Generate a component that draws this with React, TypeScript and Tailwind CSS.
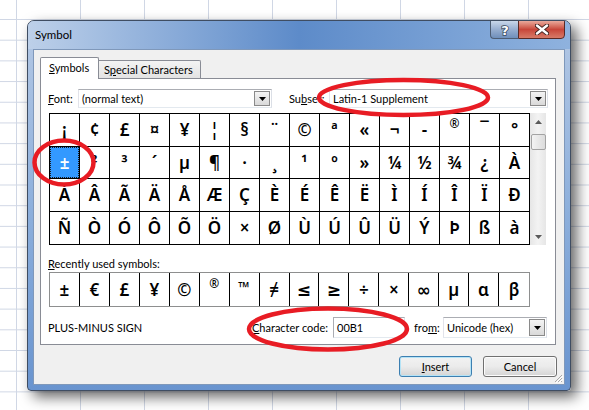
import React from "react";

const UI = "font-['Lato','Noto_Sans',sans-serif]";
const GLYPH = "font-['Noto_Sans','DejaVu_Sans',sans-serif]";

const rows: string[][] = [
  ["¡", "¢", "£", "¤", "¥", "¦", "§", "¨", "©", "ª", "«", "¬", "-", "®", "¯", "°"],
  ["±", "²", "³", "´", "µ", "¶", "·", "¸", "¹", "º", "»", "¼", "½", "¾", "¿", "À"],
  ["Á", "Â", "Ã", "Ä", "Å", "Æ", "Ç", "È", "É", "Ê", "Ë", "Ì", "Í", "Î", "Ï", "Ð"],
  ["Ñ", "Ò", "Ó", "Ô", "Õ", "Ö", "×", "Ø", "Ù", "Ú", "Û", "Ü", "Ý", "Þ", "ß", "à"],
];

const recent = ["±", "€", "£", "¥", "©", "®", "™", "≠", "≤", "≥", "÷", "×", "∞", "µ", "α", "β"];

function Glyph({ c }: { c: string }) {
  if (c === "®") {
    return <span className="relative -top-[6px] text-[12px]">{c}</span>;
  }
  if (c === "™") {
    return <span className="relative -top-[2px] text-[15px] font-bold">{c}</span>;
  }
  return <>{c}</>;
}

function DropBtn() {
  return (
    <div className="w-[16px] self-stretch my-[1px] mr-[1px] border border-[#8a8a8a] bg-gradient-to-b from-[#f4f4f4] to-[#d9d9d9] flex items-center justify-center">
      <svg width="7" height="4" viewBox="0 0 7 4">
        <path d="M0 0 H7 L3.5 4 Z" fill="#000" />
      </svg>
    </div>
  );
}

function Combo({ w, text }: { w: string; text: string }) {
  return (
    <div className={`${w} h-full flex border border-[#abadb3] border-r-[#dbdfe6] border-b-[#e3e9ef] border-l-[#e2e3ea] bg-white`}>
      <div className="flex-1 pl-[3px] flex items-center text-[11px] text-black leading-none whitespace-nowrap">{text}</div>
      <DropBtn />
    </div>
  );
}

export default function App() {
  return (
    <div
      className={`relative w-[589px] h-[410px] overflow-hidden bg-white ${UI} [background-image:linear-gradient(to_right,#d0d7e5_1px,transparent_1px),linear-gradient(to_bottom,#d0d7e5_1px,transparent_1px)] [background-size:64px_20.7px] [background-position:16px_19px]`}
    >
      <div className="pl-[27px] pt-[20px]">
        {/* dialog window */}
        <div className="w-[544px] h-[371px] rounded-t-[7px] rounded-b-[4px] border border-[#3f4d62] shadow-[6px_6px_14px_rgba(0,0,0,0.6)] bg-gradient-to-b from-[#b4c8e4] via-[#8eb0dc] to-[#6994cf] flex flex-col overflow-hidden">
          {/* title bar */}
          <div className="h-[28px] flex items-start bg-gradient-to-r from-[#bdd0e9] via-[#5d8bc9] to-[#8fb2de]">
            <div className="pl-[7px] pt-[7px] text-[11.5px] leading-[14px] text-black whitespace-nowrap">Symbol</div>
            <div className="ml-auto mr-[5px] flex h-[19px] -mt-px">
              <div className="w-[28px] h-full rounded-bl-[4px] border border-[#4d5d74] border-r-0 bg-gradient-to-b from-[#c9d7ea] via-[#97aed0] to-[#6f8fbb] flex items-center justify-center">
                <svg width="14" height="14" viewBox="0 0 14 14">
                  <text x="7" y="12" textAnchor="middle" fontFamily="DejaVu Sans, sans-serif" fontWeight="bold" fontSize="13" fill="#fff" stroke="#3a4a62" strokeWidth="1.6" paintOrder="stroke">?</text>
                </svg>
              </div>
              <div className="w-[47px] h-full rounded-br-[4px] border border-[#5a2a26] bg-gradient-to-b from-[#e9a99c] via-[#c8463a] to-[#d77a68] flex items-center justify-center">
                <svg width="14" height="11" viewBox="0 0 14 11">
                  <path d="M2 1.5 L12 9.5 M12 1.5 L2 9.5" stroke="#40221f" strokeWidth="4.2" strokeLinecap="round" />
                  <path d="M2 1.5 L12 9.5 M12 1.5 L2 9.5" stroke="#fff" strokeWidth="2.4" strokeLinecap="round" />
                </svg>
              </div>
            </div>
          </div>

          {/* client area */}
          <div className="relative mx-[5px] mb-[5px] flex-1 bg-[#f0f0f0] border border-[#7f98ba] flex flex-col">
            {/* tabs */}
            <div className="ml-[6px] mt-[7px] h-[21px] flex items-end text-[11px] leading-none text-black whitespace-nowrap">
              <div className="relative z-10 w-[59px] h-[22px] -mb-px bg-white border border-[#898c95] border-b-0 rounded-t-[2px] flex items-center pl-[8px] pb-[2px]">
                <span>
                  <span className="underline">S</span>ymbols
                </span>
              </div>
              <div className="w-[102px] h-[18px] border border-[#898c95] border-l-0 border-b-0 rounded-tr-[2px] bg-gradient-to-b from-[#f3f3f3] to-[#e3e3e3] flex items-center pl-[5px]">
                <span>
                  S<span className="underline">p</span>ecial Characters
                </span>
              </div>
            </div>

            {/* panel */}
            <div className="ml-[6px] w-[516px] h-[267px] bg-white border border-[#898c95] flex flex-col text-[11px] text-black whitespace-nowrap">
              {/* font / subset row */}
              <div className="mt-[10px] h-[19px] flex items-center">
                <div className="ml-[7px] w-[30px] leading-none">
                  <span className="underline">F</span>ont:
                </div>
                <Combo w="w-[194px]" text="(normal text)" />
                <div className="ml-[17px] w-[40px] leading-none">
                  Su<span className="underline">b</span>set:
                </div>
                <Combo w="w-[219px]" text="Latin-1 Supplement" />
              </div>

              {/* character grid */}
              <div className="ml-[8px] mt-[5px] flex">
                <div className={`w-[481px] border-l border-t border-[#000] ${GLYPH}`}>
                  {rows.map((r, ri) => (
                    <div key={ri} className="flex">
                      {r.map((c, ci) => (
                        <div
                          key={ci}
                          className={`w-[30px] ${ri === 1 ? "h-[32px]" : "h-[33px]"} border-r border-b border-[#000] flex items-center justify-center text-[17px] font-semibold text-black`}
                        >
                          {ri === 1 && ci === 0 ? (
                            <div className="w-full h-full bg-[#3399ff] border border-dotted border-[#1a1a1a] flex items-center justify-center text-white">
                              {c}
                            </div>
                          ) : (
                            <Glyph c={c} />
                          )}
                        </div>
                      ))}
                    </div>
                  ))}
                </div>
                {/* scrollbar */}
                <div className="w-[16px] h-[132px] bg-gradient-to-r from-[#e6e6e6] via-[#f3f3f3] to-[#e6e6e6] flex flex-col items-center">
                  <div className="h-[17px] flex items-center justify-center">
                    <svg width="7" height="4" viewBox="0 0 7 4">
                      <path d="M0 4 H7 L3.5 0 Z" fill="#5a5a5a" />
                    </svg>
                  </div>
                  <div className="mt-[4px] w-[15px] h-[16px] rounded-[2px] border border-[#a3a3a3] bg-gradient-to-r from-[#f3f3f3] to-[#dcdcdc]" />
                  <div className="mt-auto h-[17px] flex items-center justify-center">
                    <svg width="7" height="4" viewBox="0 0 7 4">
                      <path d="M0 0 H7 L3.5 4 Z" fill="#5a5a5a" />
                    </svg>
                  </div>
                </div>
              </div>

              {/* recent label */}
              <div className="ml-[7px] mt-[11px] h-[16px] leading-[16px]">
                <span className="underline">R</span>ecently used symbols:
              </div>

              {/* recent row */}
              <div className={`ml-[8px] w-[481px] h-[35px] flex border border-[#8e8f8f] ${GLYPH}`}>
                {recent.map((c, i) => (
                  <div
                    key={i}
                    className={`w-[30px] h-full ${i < 15 ? "border-r border-[#000]" : ""} flex items-center justify-center text-[17px] font-semibold text-black`}
                  >
                    <Glyph c={c} />
                  </div>
                ))}
              </div>

              {/* bottom row */}
              <div className="mt-[10px] h-[21px] flex items-center">
                <div className="ml-[7px] w-[204px] leading-none">PLUS-MINUS SIGN</div>
                <div className="w-[81px] leading-none">
                  <span className="underline">C</span>haracter code:
                </div>
                <div className="w-[72px] h-full border border-[#abadb3] border-r-[#dbdfe6] border-b-[#e3e9ef] bg-white flex items-center pl-[3px] leading-none">
                  00B1
                </div>
                <div className="ml-[9px] w-[29px] leading-none">
                  fro<span className="underline">m</span>:
                </div>
                <Combo w="w-[104px]" text="Unicode (hex)" />
              </div>
            </div>

            {/* buttons */}
            <div className="mt-[11px] mr-[7px] flex justify-end gap-[11px] text-[11px] text-black whitespace-nowrap">
              <div className="w-[73px] h-[21px] rounded-[3px] border border-[#3c7fb1] shadow-[inset_0_0_0_1px_#b5e3f6] bg-gradient-to-b from-[#f2f2f2] via-[#ebebeb] to-[#d4d4d4] flex items-center justify-center leading-none">
                <span>
                  <span className="underline">I</span>nsert
                </span>
              </div>
              <div className="w-[74px] h-[21px] rounded-[3px] border border-[#707070] shadow-[inset_0_0_0_1px_#fcfcfc] bg-gradient-to-b from-[#f2f2f2] via-[#ebebeb] to-[#d4d4d4] flex items-center justify-center leading-none">
                Cancel
              </div>
            </div>

            {/* resize grip */}
            <svg className="absolute right-[1px] bottom-[1px]" width="10" height="10" viewBox="0 0 10 10">
              <path d="M9 2 L2 9 M9 5 L5 9 M9 8 L8 9" stroke="#a8a8a8" strokeWidth="1" />
              <path d="M10 3 L3 10 M10 6 L6 10" stroke="#ffffff" strokeWidth="1" />
            </svg>
          </div>
        </div>
      </div>

      {/* red annotation ovals */}
      <svg className="absolute inset-0 pointer-events-none" width="589" height="410" viewBox="0 0 589 410">
        <ellipse cx="403.5" cy="97.5" rx="84.5" ry="17.5" fill="none" stroke="#e81c24" strokeWidth="4.5" />
        <ellipse cx="64" cy="162.5" rx="29.5" ry="22" fill="none" stroke="#e81c24" strokeWidth="4.5" />
        <ellipse cx="328" cy="329" rx="79" ry="20.5" fill="none" stroke="#e81c24" strokeWidth="4.5" />
      </svg>
    </div>
  );
}
